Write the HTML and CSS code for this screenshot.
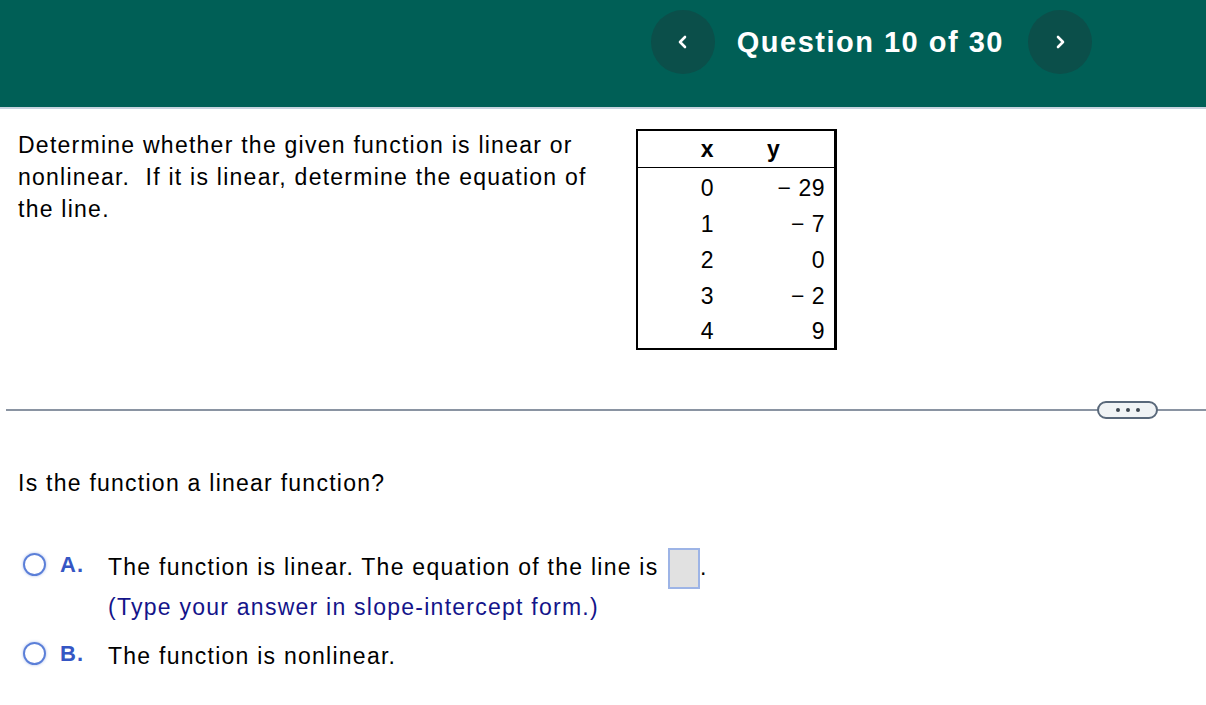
FILE: index.html
```html
<!DOCTYPE html>
<html lang="en">

<head>
    <meta charset="UTF-8">
    <title>Question 10 of 30</title>
    <link rel="stylesheet" href="styles.css">
</head>

<body>
    <header class="header">
        <div class="nav">
            <button class="nav-arrow">
                <svg width="12" height="14" viewBox="0 0 12 14"><path d="M8 2 L3 7 L8 12" fill="none" stroke="#fff" stroke-width="2.6" stroke-linecap="round" stroke-linejoin="round"/></svg>
            </button>
            <h1 class="nav-title">Question 10 of 30</h1>
            <button class="nav-arrow">
                <svg width="12" height="14" viewBox="0 0 12 14"><path d="M4 2 L9 7 L4 12" fill="none" stroke="#fff" stroke-width="2.6" stroke-linecap="round" stroke-linejoin="round"/></svg>
            </button>
        </div>
    </header>

    <div class="content">
        <div class="question">
            <p class="question-text">Determine whether the given function is linear or nonlinear.&nbsp; If it is linear, determine the equation of the line.</p>
            <table class="data-table">
                <tr>
                    <th class="col-x">x</th>
                    <th class="col-y">y</th>
                </tr>
                <tr class="first-row">
                    <td class="col-x">0</td>
                    <td class="col-y">&minus; 29</td>
                </tr>
                <tr>
                    <td class="col-x">1</td>
                    <td class="col-y">&minus; 7</td>
                </tr>
                <tr>
                    <td class="col-x">2</td>
                    <td class="col-y">0</td>
                </tr>
                <tr>
                    <td class="col-x">3</td>
                    <td class="col-y">&minus; 2</td>
                </tr>
                <tr>
                    <td class="col-x">4</td>
                    <td class="col-y">9</td>
                </tr>
            </table>
        </div>
    </div>

    <div class="divider">
        <span class="more-button"><i></i><i></i><i></i></span>
    </div>

    <div class="content">
        <p class="prompt">Is the function a linear function?</p>

        <div class="option">
            <span class="radio"></span>
            <span class="option-label">A.</span>
            <div class="option-body">
                <p>The function is linear. The equation of the line is <span class="answer-box"></span>.</p>
                <p class="hint">(Type your answer in slope-intercept form.)</p>
            </div>
        </div>

        <div class="option option-b">
            <span class="radio"></span>
            <span class="option-label">B.</span>
            <div class="option-body">
                <p>The function is nonlinear.</p>
            </div>
        </div>
    </div>
</body>

</html>
```

FILE: styles.css
```css
/* Reset */
* {
    margin: 0;
    padding: 0;
    box-sizing: border-box;
}

body {
    font-family: "Liberation Sans", Arial, sans-serif;
    font-size: 23px;
    letter-spacing: 1.25px;
    color: #000;
    background: #fff;
}

/* Header bar */
.header {
    height: 109px;
    background-color: #005f56;
    border-bottom: 2px solid #c6d2de;
    display: flex;
    justify-content: flex-end;
    padding: 10px 114px 0 0;
}

.nav {
    display: flex;
    align-items: center;
    height: 64px;
}

.nav-arrow {
    width: 64px;
    height: 64px;
    border-radius: 50%;
    border: none;
    background-color: #0b4f4a;
    display: flex;
    justify-content: center;
    align-items: center;
}

.nav-title {
    color: #fff;
    font-size: 29px;
    font-weight: bold;
    letter-spacing: 1.5px;
    margin: 0 24px 0 22px;
}

/* Question area */
.content {
    padding-left: 18px;
}

.question {
    display: flex;
    padding-top: 20px;
}

.question-text {
    width: 600px;
    line-height: 32px;
}

.data-table {
    margin-left: 18px;
    width: 201px;
    border: 2px solid #000;
    border-right-width: 3px;
    border-collapse: collapse;
    font-size: 23px;
    letter-spacing: 0.5px;
}

.data-table th {
    height: 37px;
    border-bottom: 1px solid #000;
    font-weight: bold;
    padding-top: 2px;
}

.data-table td {
    height: 36px;
    padding-top: 2px;
}

.data-table .first-row td {
    height: 38px;
    padding-top: 4px;
}

.data-table .col-x {
    width: 120px;
    padding-left: 20px;
    text-align: center;
}

.data-table th.col-y {
    text-align: left;
    padding-left: 10px;
}

.data-table td.col-y {
    text-align: right;
    padding-right: 9px;
}

/* Divider with more button */
.divider {
    position: relative;
    height: 2px;
    margin: 59px 0 0 6px;
    background-color: #8a94a2;
}

.more-button {
    position: absolute;
    left: 1091px;
    top: -8px;
    width: 61px;
    height: 18px;
    border: 2px solid #59687a;
    border-radius: 10px;
    background-color: #f0f3f5;
    display: flex;
    justify-content: center;
    align-items: center;
    gap: 6px;
}

.more-button i {
    width: 4px;
    height: 4px;
    border-radius: 50%;
    background-color: #3c4650;
}

/* Prompt and options */
.prompt {
    margin-top: 56px;
    line-height: 32px;
}

.option {
    display: flex;
    align-items: flex-start;
    margin-top: 48px;
}

.option-b {
    margin-top: 11px;
}

.radio {
    width: 23px;
    height: 23px;
    margin: 6px 0 0 5px;
    border: 2px solid #5b7fd8;
    border-radius: 50%;
    box-shadow: 0 0 3px rgba(91, 127, 216, 0.5);
}

.option-label {
    width: 48px;
    margin-left: 14px;
    font-size: 22px;
    font-weight: bold;
    letter-spacing: 1px;
    color: #3556c4;
    line-height: 36px;
}

.option-body p {
    line-height: 40px;
}

.option-body .hint {
    color: #14148a;
    line-height: 36px;
}

.answer-box {
    display: inline-block;
    width: 32px;
    height: 41px;
    margin-left: 2px;
    vertical-align: middle;
    background-color: #e1e1e1;
    border: 2px solid #9db4e6;
}
```
